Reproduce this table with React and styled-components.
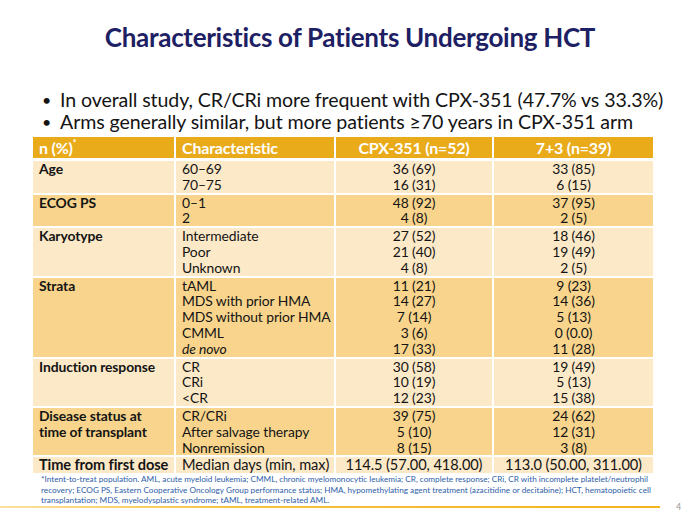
import React from 'react';
import styled, { createGlobalStyle } from 'styled-components';

const Global = createGlobalStyle`
  html, body { margin: 0; padding: 0; background: #fff; }
  body { font-family: Lato, "Open Sans", sans-serif; }
`;

const Slide = styled.div`
  width: 700px;
  height: 522px;
  background: #fff;
  display: flex;
  flex-direction: column;
  overflow: hidden;
`;

const Title = styled.h1`
  margin: 21px 0 0;
  text-align: center;
  font-size: 26px;
  line-height: 32px;
  font-weight: 700;
  color: #1d2063;
  letter-spacing: -0.3px;
`;

const Bullets = styled.ul`
  list-style: none;
  margin: 36px 0 0;
  padding: 0 0 0 40px;
`;

const Bullet = styled.li`
  display: flex;
  font-size: 19.6px;
  line-height: 22px;
  color: #141414;
  white-space: nowrap;
  letter-spacing: -0.1px;
  &::before {
    content: "•";
    width: 20px;
    flex: none;
    padding-left: 2px;
    box-sizing: border-box;
    font-size: 16px;
  }
`;

const Table = styled.table`
  margin: 4px 0 0 33px;
  width: 620px;
  border-collapse: collapse;
  table-layout: fixed;
  line-height: 15.8px;
  color: #141414;
`;

const Col = styled.col`
  width: ${p => p.$w}px;
`;

const Th = styled.th`
  background: #e9ab1a;
  color: #fff;
  font-weight: 700;
  font-size: 16px;
  letter-spacing: -0.2px;
  line-height: 21px;
  height: 21px;
  padding: 0 6px;
  text-align: ${p => p.$align || 'center'};
  border-left: 2px solid #fff;
  border-bottom: 3px solid #fff;
  &:first-child { border-left: none; }
  sup { font-size: 9px; vertical-align: 8px; line-height: 0; }
`;

const Row = styled.tr`
  background: ${p => (p.$dark ? '#f8d48c' : '#fce9c8')};
  font-size: ${p => (p.$big ? '14.6px' : '13.9px')};
  letter-spacing: -0.1px;
`;

const Td = styled.td`
  padding: 0 6px;
  vertical-align: top;
  text-align: ${p => p.$align || 'center'};
  font-weight: ${p => (p.$bold ? 700 : 400)};
  border-top: 2px solid #fff;
  border-left: 2px solid #fff;
  white-space: nowrap;
  &:first-child { border-left: none; }
`;

const Line = styled.div`
  font-style: ${p => (p.$italic ? 'italic' : 'normal')};
`;

const Footnote = styled.div`
  margin: 1px 0 0 41px;
  font-size: 8.2px;
  line-height: 10.5px;
  color: #2d5ea8;
`;

const FootLine = styled.div`
  white-space: nowrap;
`;

const Footer = styled.div`
  margin-top: auto;
  padding-bottom: 14px;
  display: flex;
  align-items: flex-start;
`;

const Rule = styled.div`
  flex: 0 0 660px;
  height: 2px;
  background: linear-gradient(to right, #fbe1a0 0%, #f5c441 35%, #f2b31b 100%);
`;

const PageNum = styled.span`
  margin: -4px 0 0 16px;
  font-size: 9px;
  line-height: 10px;
  color: #9a9a9a;
`;

const rows = [
  { label: ['Age'], chars: ['60–69', '70–75'], a: ['36 (69)', '16 (31)'], b: ['33 (85)', '6 (15)'] },
  { label: ['ECOG PS'], chars: ['0–1', '2'], a: ['48 (92)', '4 (8)'], b: ['37 (95)', '2 (5)'], dark: true },
  { label: ['Karyotype'], chars: ['Intermediate', 'Poor', 'Unknown'], a: ['27 (52)', '21 (40)', '4 (8)'], b: ['18 (46)', '19 (49)', '2 (5)'] },
  {
    label: ['Strata'],
    chars: ['tAML', 'MDS with prior HMA', 'MDS without prior HMA', 'CMML', 'de novo'],
    italicLast: true,
    a: ['11 (21)', '14 (27)', '7 (14)', '3 (6)', '17 (33)'],
    b: ['9 (23)', '14 (36)', '5 (13)', '0 (0.0)', '11 (28)'],
    dark: true,
  },
  { label: ['Induction response'], chars: ['CR', 'CRi', '<CR'], a: ['30 (58)', '10 (19)', '12 (23)'], b: ['19 (49)', '5 (13)', '15 (38)'] },
  {
    label: ['Disease status at', 'time of transplant'],
    chars: ['CR/CRi', 'After salvage therapy', 'Nonremission'],
    a: ['39 (75)', '5 (10)', '8 (15)'],
    b: ['24 (62)', '12 (31)', '3 (8)'],
    dark: true,
  },
  { label: ['Time from first dose'], chars: ['Median days (min, max)'], a: ['114.5 (57.00, 418.00)'], b: ['113.0 (50.00, 311.00)'], big: true },
];

const Lines = ({ items, italicLast }) =>
  items.map((t, i) => (
    <Line key={i} $italic={italicLast && i === items.length - 1}>
      {t}
    </Line>
  ));

export default function App() {
  return (
    <>
      <Global />
      <Slide>
        <Title>Characteristics of Patients Undergoing HCT</Title>
        <Bullets>
          <Bullet>In overall study, CR/CRi more frequent with CPX-351 (47.7% vs 33.3%)</Bullet>
          <Bullet>Arms generally similar, but more patients ≥70 years in CPX-351 arm</Bullet>
        </Bullets>
        <Table>
          <colgroup>
            <Col $w={142} />
            <Col $w={160} />
            <Col $w={158} />
            <Col $w={160} />
          </colgroup>
          <thead>
            <tr>
              <Th $align="left">
                n (%)<sup>*</sup>
              </Th>
              <Th $align="left">Characteristic</Th>
              <Th>CPX-351 (n=52)</Th>
              <Th>7+3 (n=39)</Th>
            </tr>
          </thead>
          <tbody>
            {rows.map((r, i) => (
              <Row key={i} $dark={r.dark} $big={r.big}>
                <Td $align="left" $bold>
                  <Lines items={r.label} />
                </Td>
                <Td $align="left">
                  <Lines items={r.chars} italicLast={r.italicLast} />
                </Td>
                <Td>
                  <Lines items={r.a} />
                </Td>
                <Td>
                  <Lines items={r.b} />
                </Td>
              </Row>
            ))}
          </tbody>
        </Table>
        <Footnote>
          <FootLine>
            *Intent-to-treat population. AML, acute myeloid leukemia; CMML, chronic myelomonocytic leukemia; CR, complete response; CRi, CR with incomplete platelet/neutrophil
          </FootLine>
          <FootLine>
            recovery; ECOG PS, Eastern Cooperative Oncology Group performance status; HMA, hypomethylating agent treatment (azacitidine or decitabine); HCT, hematopoietic cell
          </FootLine>
          <FootLine>transplantation; MDS, myelodysplastic syndrome; tAML, treatment-related AML.</FootLine>
        </Footnote>
        <Footer>
          <Rule />
          <PageNum>4</PageNum>
        </Footer>
      </Slide>
    </>
  );
}
